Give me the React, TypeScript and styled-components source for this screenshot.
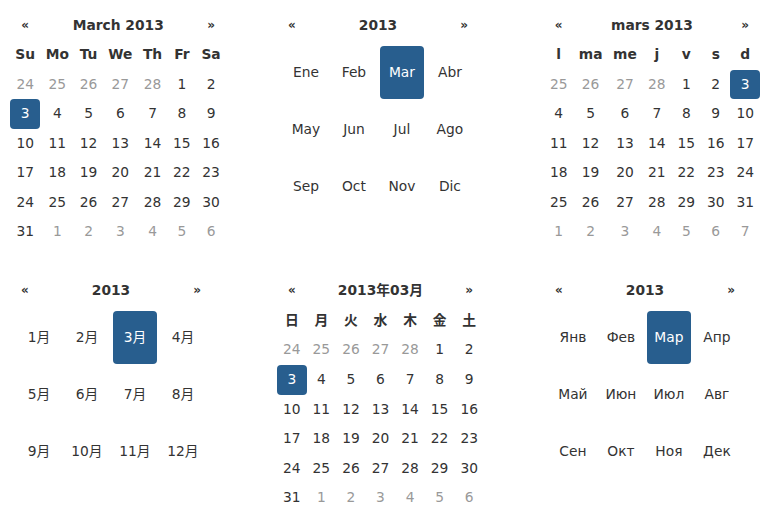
import React from "react";
import styled, { createGlobalStyle, css } from "styled-components";

const GlobalStyle = createGlobalStyle`
  body {
    margin: 0;
    background: #fff;
    color: #333;
    font-family: "DejaVu Sans", "Noto Sans CJK JP", sans-serif;
    font-size: 13.8px;
  }
`;

const Page = styled.div`
  display: grid;
  grid-template-columns: repeat(3, 216px);
  column-gap: 51px;
  row-gap: 29.4px;
  align-items: start;
  justify-items: start;
  padding: 10.7px 0 0 10px;
`;

const Table = styled.table<{ $fixed?: boolean }>`
  border-collapse: separate;
  border-spacing: 0;
  margin: 0;
  ${(p) =>
    p.$fixed &&
    css`
      table-layout: fixed;
      width: 202px;
    `}
`;

const cell = css`
  text-align: center;
  vertical-align: middle;
  padding: 4.93px 5.3px;
  width: 18.97px;
  height: 19.7px;
  line-height: 19.7px;
  border-radius: 4px;
  white-space: nowrap;
`;

const Nav = styled.th`
  ${cell}
  font-weight: bold;
  font-size: 12px;
  color: #333;
`;

const Title = styled.th`
  ${cell}
  width: auto;
  font-weight: bold;
  color: #333;
`;

const Dow = styled.th`
  ${cell}
  font-weight: bold;
  color: #333;
`;

const Day = styled.td<{ $muted?: boolean; $active?: boolean }>`
  ${cell}
  color: ${(p) => (p.$muted ? "#999" : "#333")};
  ${(p) =>
    p.$active &&
    css`
      background: #285e8e;
      color: #fff;
    `}
`;

const MonthsCell = styled.td`
  padding: 3.4px 4.93px 4.93px;
`;

const MonthGrid = styled.div`
  display: flex;
  flex-wrap: wrap;
`;

const Month = styled.span<{ $active?: boolean }>`
  display: block;
  width: 23%;
  height: 53.2px;
  line-height: 53.2px;
  margin: 1%;
  text-align: center;
  border-radius: 4px;
  color: #333;
  ${(p) =>
    p.$active &&
    css`
      background: #285e8e;
      color: #fff;
    `}
`;

type DayCell = { n: number; muted?: boolean };

function buildWeeks(leading: number[], days: number, trailing: number): DayCell[][] {
  const all: DayCell[] = [
    ...leading.map((n) => ({ n, muted: true })),
    ...Array.from({ length: days }, (_, i) => ({ n: i + 1 })),
    ...Array.from({ length: trailing }, (_, i) => ({ n: i + 1, muted: true })),
  ];
  const weeks: DayCell[][] = [];
  for (let i = 0; i < all.length; i += 7) weeks.push(all.slice(i, i + 7));
  return weeks;
}

function Header({ title }: { title: string }) {
  return (
    <tr>
      <Nav>«</Nav>
      <Title colSpan={5}>{title}</Title>
      <Nav>»</Nav>
    </tr>
  );
}

function DaysView({ title, dow, weeks }: { title: string; dow: string[]; weeks: DayCell[][] }) {
  return (
    <Table>
      <thead>
        <Header title={title} />
        <tr>
          {dow.map((d) => (
            <Dow key={d}>{d}</Dow>
          ))}
        </tr>
      </thead>
      <tbody>
        {weeks.map((w, i) => (
          <tr key={i}>
            {w.map((d, j) => (
              <Day key={j} $muted={d.muted} $active={!d.muted && d.n === 3}>
                {d.n}
              </Day>
            ))}
          </tr>
        ))}
      </tbody>
    </Table>
  );
}

function MonthsView({ title, months }: { title: string; months: string[] }) {
  return (
    <Table $fixed>
      <thead>
        <Header title={title} />
      </thead>
      <tbody>
        <tr>
          <MonthsCell colSpan={7}>
            <MonthGrid>
              {months.map((m, i) => (
                <Month key={m} $active={i === 2}>
                  {m}
                </Month>
              ))}
            </MonthGrid>
          </MonthsCell>
        </tr>
      </tbody>
    </Table>
  );
}

const sundayWeeks = buildWeeks([24, 25, 26, 27, 28], 31, 6);
const mondayWeeks = buildWeeks([25, 26, 27, 28], 31, 7);

export default function App() {
  return (
    <>
      <GlobalStyle />
      <Page>
        <DaysView
          title="March 2013"
          dow={["Su", "Mo", "Tu", "We", "Th", "Fr", "Sa"]}
          weeks={sundayWeeks}
        />
        <MonthsView
          title="2013"
          months={["Ene", "Feb", "Mar", "Abr", "May", "Jun", "Jul", "Ago", "Sep", "Oct", "Nov", "Dic"]}
        />
        <DaysView
          title="mars 2013"
          dow={["l", "ma", "me", "j", "v", "s", "d"]}
          weeks={mondayWeeks}
        />
        <MonthsView
          title="2013"
          months={["1月", "2月", "3月", "4月", "5月", "6月", "7月", "8月", "9月", "10月", "11月", "12月"]}
        />
        <DaysView
          title="2013年03月"
          dow={["日", "月", "火", "水", "木", "金", "土"]}
          weeks={sundayWeeks}
        />
        <MonthsView
          title="2013"
          months={["Янв", "Фев", "Мар", "Апр", "Май", "Июн", "Июл", "Авг", "Сен", "Окт", "Ноя", "Дек"]}
        />
      </Page>
    </>
  );
}
